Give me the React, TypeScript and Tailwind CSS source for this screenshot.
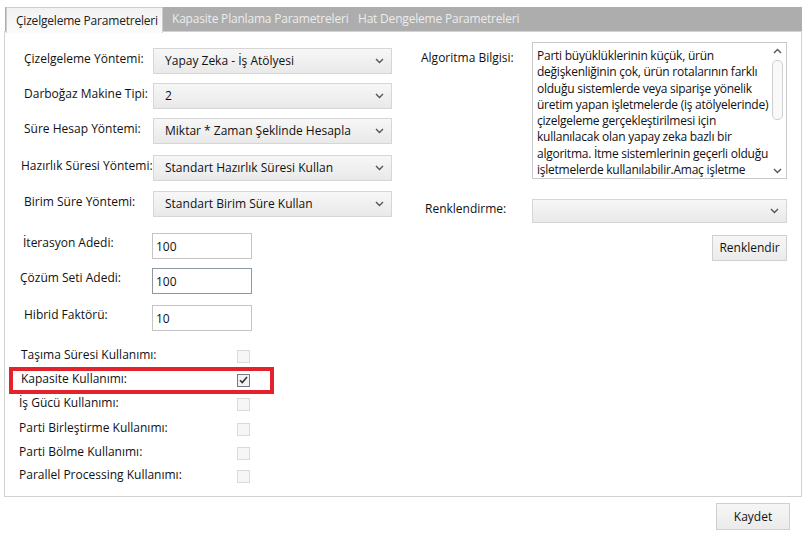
import React from "react";

const font = { fontFamily: '"Open Sans", "Noto Sans", sans-serif' };

function Chevron() {
  return (
    <svg width="9" height="6" viewBox="0 0 9 6" className="shrink-0">
      <path d="M1 1 L4.5 4.5 L8 1" fill="none" stroke="#555" strokeWidth="1.4" />
    </svg>
  );
}

function Select({ value, w }: { value: string; w: string }) {
  return (
    <div
      className={`${w} flex items-center justify-between pl-[11px] pr-[7px] border border-[#d6d6d6] bg-gradient-to-b from-[#f7f7f7] to-[#e9e9e9] text-[12px] text-[#111]`}
    >
      <span>{value}</span>
      <Chevron />
    </div>
  );
}

function TextInput({ value, focused }: { value: string; focused?: boolean }) {
  return (
    <div
      className={`w-[100px] h-[26px] flex items-center pl-[3px] pt-[2px] bg-white border ${
        focused ? "border-[#8e98a4]" : "border-[#c4c4c4]"
      } text-[12px] text-[#111]`}
    >
      {value}
    </div>
  );
}

function Checkbox({ checked }: { checked?: boolean }) {
  return (
    <div
      className={`w-[13px] h-[13px] flex items-center justify-center border ${
        checked ? "border-[#707a88] bg-[#f2f2f2]" : "border-[#dadada] bg-[#f6f6f6]"
      }`}
    >
      {checked && (
        <svg width="9" height="8" viewBox="0 0 9 8">
          <path d="M1 4.2 L3.3 6.6 L8 1" fill="none" stroke="#333" strokeWidth="1.6" />
        </svg>
      )}
    </div>
  );
}

function Button({ label, w, h }: { label: string; w: string; h: string }) {
  return (
    <div
      className={`${w} ${h} flex items-center justify-center border border-[#cfcfcf] bg-gradient-to-b from-[#f6f6f6] to-[#ebebeb] text-[12px] text-[#111]`}
    >
      {label}
    </div>
  );
}

export default function App() {
  const selects = [
    { label: "Çizelgeleme Yöntemi:", value: "Yapay Zeka - İş Atölyesi", pl: "pl-[19px]", mt: "mt-[16px]" },
    { label: "Darboğaz Makine Tipi:", value: "2", pl: "pl-[19px]", mt: "mt-[9px]" },
    { label: "Süre Hesap Yöntemi:", value: "Miktar * Zaman Şeklinde Hesapla", pl: "pl-[19px]", mt: "mt-[9px]" },
    { label: "Hazırlık Süresi Yöntemi:", value: "Standart Hazırlık Süresi Kullan", pl: "pl-[16px]", mt: "mt-[11px]" },
    { label: "Birim Süre Yöntemi:", value: "Standart Birim Süre Kullan", pl: "pl-[19px]", mt: "mt-[10px]" },
  ];
  const inputs = [
    { label: "İterasyon Adedi:", value: "100", pl: "pl-[18px]", mt: "mt-[16px]" },
    { label: "Çözüm Seti Adedi:", value: "100", pl: "pl-[15px]", mt: "mt-[9px]", focused: true },
    { label: "Hibrid Faktörü:", value: "10", pl: "pl-[19px]", mt: "mt-[11px]" },
  ];
  const checks = [
    { label: "Taşıma Süresi Kullanımı:", pl: "pl-[16px]", h: "h-[24px]" },
    { label: "Kapasite Kullanımı:", pl: "pl-[16px]", h: "h-[24px]", checked: true },
    { label: "İş Gücü Kullanımı:", pl: "pl-[14px]", h: "h-[24px]" },
    { label: "Parti Birleştirme Kullanımı:", pl: "pl-[14px]", h: "h-[26px]" },
    { label: "Parti Bölme Kullanımı:", pl: "pl-[14px]", h: "h-[22px]" },
    { label: "Parallel Processing Kullanımı:", pl: "pl-[14px]", h: "h-[24px]" },
  ];

  const lines = [
    "Parti büyüklüklerinin küçük, ürün",
    "değişkenliğinin çok, ürün rotalarının farklı",
    "olduğu sistemlerde veya siparişe yönelik",
    "üretim yapan işletmelerde (iş atölyelerinde)",
    "çizelgeleme gerçekleştirilmesi için",
    "kullanılacak olan yapay zeka bazlı bir",
    "algoritma. İtme sistemlerinin geçerli olduğu",
    "işletmelerde kullanılabilir.Amaç işletme",
  ];

  return (
    <div className="w-[809px] h-[535px] bg-white overflow-hidden text-[#111]" style={font}>
      {/* Tab strip */}
      <div className="pt-[7px] pl-[5px] pr-[7px]">
        <div className="h-[24px] bg-[#adadad] flex items-start text-[12px] tracking-[-0.2px] whitespace-nowrap">
          <div className="relative z-10 h-[26px] w-[157px] ml-[1px] bg-gradient-to-b from-[#f2f2f2] to-[#fbfbfb] border border-b-0 border-[#cdcdcd] flex items-center pl-[9px] text-[#222]">
            Çizelgeleme Parametreleri
          </div>
          <div className="h-[24px] w-[187px] flex items-center pl-[9px] text-[#ececec]">
            Kapasite Planlama Parametreleri
          </div>
          <div className="h-[24px] flex items-center pl-[8px] text-[#ececec]">Hat Dengeleme Parametreleri</div>
        </div>
      </div>

      {/* Panel */}
      <div className="relative ml-[4px] w-[798px] h-[466px] border border-[#d2d2d2] bg-white flex text-[12px]">
        {/* Left column */}
        <div className="w-[400px] flex flex-col">
          {selects.map((s) => (
            <div key={s.label} className={`flex items-center h-[26px] ${s.mt}`}>
              <div className={`w-[148px] ${s.pl} pb-[4px] whitespace-nowrap`}>{s.label}</div>
              <Select value={s.value} w="w-[239px] h-[26px]" />
            </div>
          ))}
          {inputs.map((s) => (
            <div key={s.label} className={`flex items-center h-[26px] ${s.mt}`}>
              <div className={`w-[147px] ${s.pl} pb-[6px] whitespace-nowrap`}>{s.label}</div>
              <TextInput value={s.value} focused={s.focused} />
            </div>
          ))}
          <div className="mt-[13px] flex flex-col">
            {checks.map((c) => (
              <div key={c.label} className={`flex items-center ${c.h}`}>
                <div className={`w-[232px] ${c.pl} pb-[2px] whitespace-nowrap`}>{c.label}</div>
                <Checkbox checked={c.checked} />
              </div>
            ))}
          </div>
        </div>

        {/* Right column */}
        <div className="flex-1 flex flex-col pt-[10px] pr-[14px]">
          <div className="flex items-start">
            <div className="w-[127px] pl-[16px] pt-[7px] whitespace-nowrap">Algoritma Bilgisi:</div>
            <div className="flex-1 h-[137px] border border-[#c9c9c9] bg-white flex">
              <div className="flex-1 pl-[4px] pt-[5px] text-[12px] tracking-[-0.25px] leading-[16.3px] overflow-hidden whitespace-nowrap">
                {lines.map((l) => (
                  <div key={l}>{l}</div>
                ))}
              </div>
              <div className="w-[17px] flex flex-col items-center pt-[5px] pb-[4px]">
                <svg width="9" height="6" viewBox="0 0 9 6">
                  <path d="M1 5 L4.5 1.5 L8 5" fill="none" stroke="#555" strokeWidth="1.4" />
                </svg>
                <div className="mt-[6px] w-[11px] h-[60px] rounded-[5px] border border-[#cfcfcf] bg-[#f9f9f9]" />
                <div className="flex-1" />
                <Chevron />
              </div>
            </div>
          </div>
          <div className="flex items-center mt-[20px] h-[24px]">
            <div className="w-[127px] pl-[20px] pb-[4px] whitespace-nowrap">Renklendirme:</div>
            <Select value="" w="flex-1 h-[24px]" />
          </div>
          <div className="flex justify-end mt-[12px]">
            <Button label="Renklendir" w="w-[75px]" h="h-[26px]" />
          </div>
        </div>

        {/* Annotation highlight */}
        <div className="absolute left-[4px] top-[335px] w-[265px] h-[27px] border-[4px] border-[#e3222b]" />
      </div>

      <div className="flex pl-[716px] mt-[6px]">
        <Button label="Kaydet" w="w-[74px]" h="h-[27px]" />
      </div>
    </div>
  );
}
